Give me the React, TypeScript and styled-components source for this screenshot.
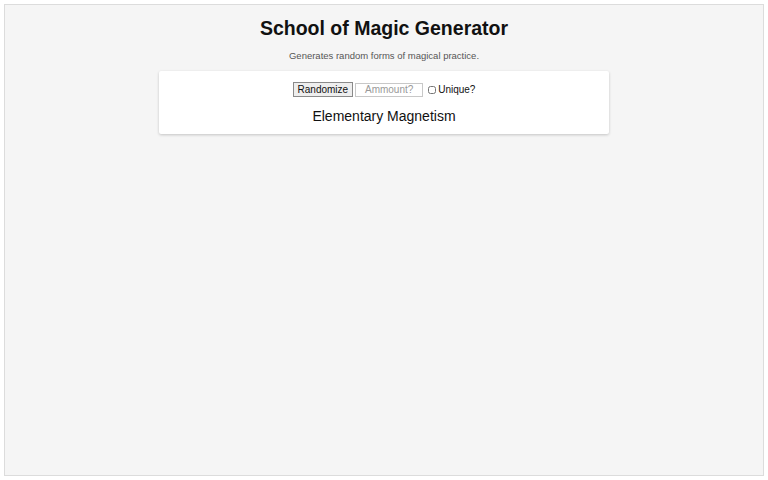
import { useState } from "react";
import styled, { createGlobalStyle } from "styled-components";

const GlobalStyle = createGlobalStyle`
    html, body {
        margin: 0;
        padding: 0;
        background: #ffffff;
    }

    body {
        padding: 4px;
        font-family: "Liberation Sans", Arial, sans-serif;
    }
`;

const Page = styled.div`
    box-sizing: border-box;
    height: 472px;
    border: 1px solid #dcdcdc;
    background: #f5f5f5;
    display: flex;
    flex-direction: column;
    align-items: center;
    padding-top: 11px;
`;

const Title = styled.h1`
    margin: 0;
    font-size: 19.5px;
    font-weight: bold;
    color: #111;
    line-height: 24px;
`;

const Subtitle = styled.p`
    margin: 10px 0 0;
    font-size: 9.5px;
    color: #555;
    line-height: 12px;
`;

const Card = styled.div`
    box-sizing: border-box;
    margin-top: 9px;
    width: 450px;
    background: #ffffff;
    border-radius: 2px;
    box-shadow: 0 1px 3px rgba(0, 0, 0, 0.2);
    padding: 11px 0 9px;
    display: flex;
    flex-direction: column;
    align-items: center;
`;

const Controls = styled.div`
    display: flex;
    align-items: center;
    gap: 2px;
`;

const Button = styled.button`
    font-family: "Liberation Sans", Arial, sans-serif;
    font-size: 10px;
    color: #111;
    background: #eeeeee;
    border: 1px solid #8a8a8a;
    border-radius: 0;
    padding: 1px 4px;
    height: 15px;
    line-height: 11px;
`;

const Input = styled.input`
    box-sizing: border-box;
    font-family: "Liberation Sans", Arial, sans-serif;
    font-size: 10px;
    width: 68px;
    height: 14px;
    border: 1px solid #c8c8c8;
    padding: 0 3px;
    text-align: center;

    &::placeholder {
        color: #999;
    }
`;

const Label = styled.label`
    display: flex;
    align-items: center;
    margin-left: 3px;
    font-size: 10px;
    color: #111;
`;

const Check = styled.input`
    margin: 0 2px 0 0;
    width: 8px;
    height: 8px;
`;

const Result = styled.div`
    margin-top: 10px;
    font-size: 14px;
    color: #111;
    line-height: 18px;
`;

export default function App() {
    const [result] = useState("Elementary Magnetism");

    return (
        <>
            <GlobalStyle />
            <Page>
                <Title>School of Magic Generator</Title>
                <Subtitle>Generates random forms of magical practice.</Subtitle>
                <Card>
                    <Controls>
                        <Button>Randomize</Button>
                        <Input placeholder="Ammount?" />
                        <Label>
                            <Check type="checkbox" />
                            Unique?
                        </Label>
                    </Controls>
                    <Result>{result}</Result>
                </Card>
            </Page>
        </>
    );
}
